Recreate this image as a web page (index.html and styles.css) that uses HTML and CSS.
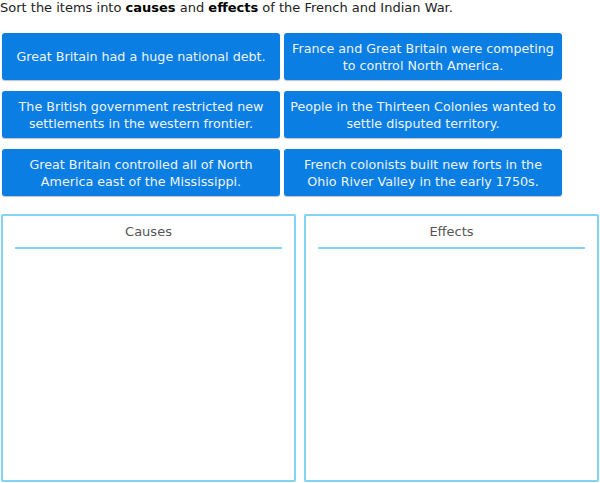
FILE: index.html
```html
<!DOCTYPE html>
<html lang="en">

<head>
  <meta charset="UTF-8">
  <meta name="viewport" content="width=device-width, initial-scale=1.0">
  <title>Causes and Effects</title>
  <link rel="stylesheet" href="styles.css">
</head>

<body>
  <p class="prompt">Sort the items into <b>causes</b> and <b>effects</b> of the French and Indian War.</p>

  <div class="tiles">
    <div class="tile">Great Britain had a huge national debt.</div>
    <div class="tile">France and Great Britain were competing to control North America.</div>
    <div class="tile">The British government restricted new settlements in the western frontier.</div>
    <div class="tile">People in the Thirteen Colonies wanted to settle disputed territory.</div>
    <div class="tile">Great Britain controlled all of North America east of the Mississippi.</div>
    <div class="tile">French colonists built new forts in the Ohio River Valley in the early 1750s.</div>
  </div>

  <div class="bins">
    <div class="bin">
      <div class="bin-title">Causes</div>
    </div>
    <div class="bin">
      <div class="bin-title">Effects</div>
    </div>
  </div>
</body>

</html>
```

FILE: styles.css
```css
body {
  margin: 0;
  font-family: "DejaVu Sans", Verdana, sans-serif;
  font-size: 13px;
  color: #222;
  background-color: #fff;
}

.prompt {
  margin: 0;
  line-height: 15px;
}

.prompt b {
  color: #000;
}

.tiles {
  display: grid;
  grid-template-columns: 278px 278px;
  column-gap: 4px;
  row-gap: 11px;
  margin: 18px 0 0 2px;
}

.tile {
  height: 47px;
  box-sizing: border-box;
  display: flex;
  align-items: center;
  justify-content: center;
  padding: 0 5px;
  text-align: center;
  font-size: 12.7px;
  line-height: 17px;
  background-color: #0a7ee3;
  color: #eef4fb;
  border-radius: 3px;
  box-shadow: 0 1px 1px rgba(0, 0, 0, 0.25);
}

.bins {
  display: grid;
  grid-template-columns: 295px 295px;
  column-gap: 8px;
  margin: 18px 0 0 1px;
}

.bin {
  height: 268px;
  box-sizing: border-box;
  border: 2px solid #83d3f7;
  border-radius: 2px;
  padding: 0 12px;
}

.bin-title {
  text-align: center;
  color: #555;
  line-height: 17px;
  padding: 7px 0 7px;
  border-bottom: 2px solid #83d3f7;
}
```
